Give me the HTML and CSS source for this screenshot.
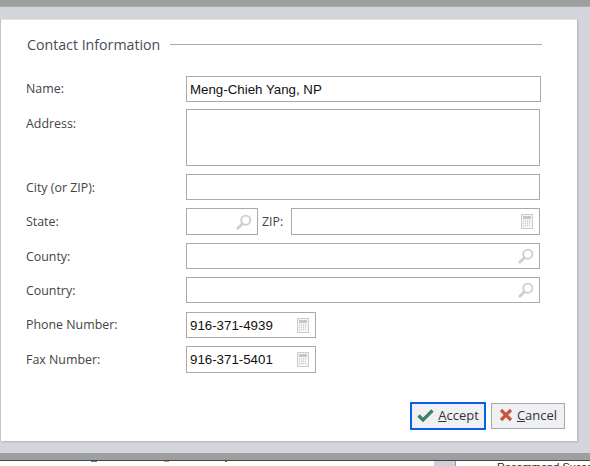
FILE: index.html
```html
<!DOCTYPE html>
<html lang="en">

<head>
    <meta charset="UTF-8">
    <meta name="viewport" content="width=device-width, initial-scale=1.0">
    <title>Contact Information</title>
    <link rel="stylesheet" href="styles.css">
</head>

<body>
    <svg class="icon-defs" width="0" height="0">
        <symbol id="lookup" viewBox="0 0 16 16">
            <circle cx="9.8" cy="6.2" r="4.6" fill="none" stroke="#cfcfcf" stroke-width="1.9" />
            <path d="M6.3 9.7 1.8 14.2" stroke="#cfcfcf" stroke-width="2.8" stroke-linecap="round" />
        </symbol>
        <symbol id="calc" viewBox="0 0 12 15">
            <rect x="0.5" y="0.5" width="11" height="14" fill="#f4f5f6" stroke="#c9ced3" />
            <rect x="2" y="2" width="8" height="3" fill="#c3c8cd" />
            <path d="M2 7h8M2 9.2h8M2 11.4h8" stroke="#bcc1c6" stroke-dasharray="1 1" />
        </symbol>
    </svg>

    <div class="top-strip"></div>

    <div class="dialog-shell">
        <form class="dialog">
            <div class="group-title">
                <span>Contact Information</span>
                <div class="group-line"></div>
            </div>

            <div class="row row-name">
                <label>Name:</label>
                <div class="field field-name">Meng-Chieh Yang, NP</div>
            </div>
            <div class="row row-address">
                <label>Address:</label>
                <div class="field field-address"></div>
            </div>
            <div class="row row-city">
                <label>City (or ZIP):</label>
                <div class="field"></div>
            </div>
            <div class="row row-state">
                <label>State:</label>
                <div class="field field-state">
                    <svg class="lookup-icon"><use href="#lookup" /></svg>
                </div>
                <label class="zip-label">ZIP:</label>
                <div class="field field-zip">
                    <svg class="calc-icon"><use href="#calc" /></svg>
                </div>
            </div>
            <div class="row row-county">
                <label>County:</label>
                <div class="field">
                    <svg class="lookup-icon"><use href="#lookup" /></svg>
                </div>
            </div>
            <div class="row row-country">
                <label>Country:</label>
                <div class="field">
                    <svg class="lookup-icon"><use href="#lookup" /></svg>
                </div>
            </div>
            <div class="row row-phone">
                <label>Phone Number:</label>
                <div class="field field-phone">
                    916-371-4939
                    <svg class="calc-icon"><use href="#calc" /></svg>
                </div>
            </div>
            <div class="row row-fax">
                <label>Fax Number:</label>
                <div class="field field-phone">
                    916-371-5401
                    <svg class="calc-icon"><use href="#calc" /></svg>
                </div>
            </div>

            <div class="actions">
                <button type="button" class="btn btn-accept">
                    <svg width="17" height="14" viewBox="0 0 17 14">
                        <path d="M1.5 7.5 6 12 15.5 2.5" fill="none" stroke="#3d8263" stroke-width="3.2" />
                    </svg>
                    <span><u>A</u>ccept</span>
                </button>
                <button type="button" class="btn btn-cancel">
                    <svg width="14" height="14" viewBox="0 0 14 14">
                        <path d="M2 2 12 12M12 2 2 12" fill="none" stroke="#c8543c" stroke-width="3.2" />
                    </svg>
                    <span><u>C</u>ancel</span>
                </button>
            </div>
        </form>
    </div>

    <div class="bottom-strip"></div>
    <div class="page-behind">
        <span class="peek peek-blue"></span>
        <span class="peek peek-gold"></span>
        <span class="peek peek-red"></span>
        <span class="peek peek-tab"></span>
        <span class="behind-text">Recommend Succe</span>
    </div>
</body>

</html>
```

FILE: styles.css
```css
html,
body {
    margin: 0;
    height: 466px;
    overflow: hidden;
}

body {
    font-family: "Open Sans", "Liberation Sans", sans-serif;
    background: #fff;
    color: #444;
    display: flex;
    flex-direction: column;
}

.icon-defs {
    position: absolute;
}

.top-strip {
    height: 7px;
    background: #9f9f9f;
    border-bottom: 1px solid #a3a9bd;
    box-sizing: border-box;
}

.dialog-shell {
    height: 446px;
    flex: none;
    background: #d4d5db;
    padding: 12px 13px 12px 1px;
    box-sizing: border-box;
}

.dialog {
    height: 422px;
    background: #fff;
    box-shadow: 1px 1px 2px #b0b0b5, -1px 0 0 #c4c5ca;
    border-top: 1px solid #e6e7ea;
    box-sizing: border-box;
    padding: 14px 37px 0 25px;
    display: flex;
    flex-direction: column;
}

.group-title {
    display: flex;
    align-items: center;
    gap: 10px;
    height: 20px;
    margin: 0 -2px 22px 1px;
    font-size: 14.2px;
    color: #4a4d55;
}

.group-line {
    flex: 1;
    height: 1px;
    background: #aaa;
}

.row {
    display: flex;
    align-items: center;
    margin-bottom: 8px;
    font-size: 12.4px;
}

.row label {
    width: 160px;
    flex: none;
}

.row-name label,
.row-phone label {
    padding-bottom: 2px;
}

.row .zip-label {
    width: 29px;
    padding-left: 4px;
    box-sizing: border-box;
}

.field {
    flex: 1;
    height: 26px;
    border: 1px solid #aaa;
    box-sizing: border-box;
    background: #fff;
    display: flex;
    align-items: center;
    justify-content: space-between;
    padding: 0 3px;
    font-family: "Liberation Sans", Arial, sans-serif;
    font-size: 13.3px;
    color: #111;
}

.field svg {
    margin-left: auto;
    flex: none;
}

.row-name {
    margin-bottom: 7px;
}

.field-name {
    margin-right: -1px;
}

.row-address {
    align-items: flex-start;
}

.row-address label {
    padding-top: 6px;
}

.field-address {
    height: 57px;
}

.field-state {
    flex: none;
    width: 72px;
    height: 27px;
}

.field-zip {
    margin-left: 4px;
    height: 27px;
}

.field-phone {
    flex: none;
    width: 130px;
}

.row-fax .field {
    height: 27px;
}

.lookup-icon {
    width: 16px;
    height: 16px;
    margin-right: 2px;
}

.calc-icon {
    width: 12px;
    height: 15px;
    margin-right: 3px;
}

.row-phone {
    margin-top: 1px;
}

.actions {
    margin-top: auto;
    margin-right: -25px;
    margin-bottom: 11px;
    display: flex;
    justify-content: flex-end;
    align-items: center;
    gap: 5px;
}

.btn {
    height: 26px;
    display: flex;
    align-items: center;
    justify-content: center;
    gap: 4px;
    padding: 0 0 2px;
    background: #eef0f3;
    border: 1px solid #aaa;
    font-family: "Open Sans", "Liberation Sans", sans-serif;
    font-size: 13px;
    color: #333;
    box-sizing: border-box;
}

.btn-accept {
    width: 76px;
    height: 28px;
    border: 2px solid #0a5ff0;
}

.btn-cancel {
    width: 74px;
}

.bottom-strip {
    height: 7px;
    flex: none;
    background: #9f9f9f;
    border-bottom: 1px solid #444;
}

.page-behind {
    flex: 1;
    position: relative;
    overflow: hidden;
    font-family: "Liberation Sans", Arial, sans-serif;
    font-size: 11px;
    color: #222;
}

.behind-text {
    position: absolute;
    left: 497px;
    top: 0;
    white-space: nowrap;
}

/* bits of the page underneath that show below the dialog */
.peek {
    position: absolute;
    top: 0;
    height: 1px;
}

.peek-blue {
    left: 91px;
    width: 6px;
    background: #4a7fb5;
}

.peek-gold {
    left: 164px;
    width: 5px;
    background: #c9a33c;
}

.peek-red {
    left: 225px;
    width: 2px;
    background: #c0503c;
}

.peek-tab {
    left: 434px;
    width: 21px;
    height: 5px;
    background: #d0d1d6;
    border-right: 1px solid #9a9a9a;
}
```
